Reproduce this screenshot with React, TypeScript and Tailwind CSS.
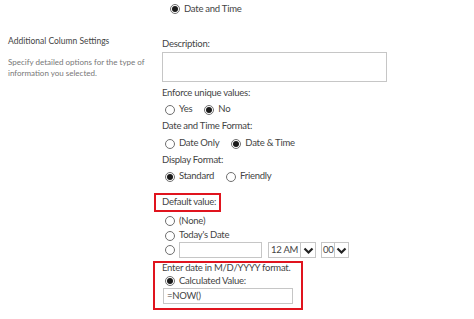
import React from "react";

function Radio({ checked }: { checked?: boolean }) {
  return (
    <span className="inline-flex h-[10px] w-[10px] shrink-0 items-center justify-center rounded-full border border-[#6f6f6f] bg-white">
      {checked && <span className="h-[6px] w-[6px] rounded-full bg-[#1a1a1a]" />}
    </span>
  );
}

function Opt({ checked, label }: { checked?: boolean; label: string }) {
  return (
    <span className="inline-flex items-center gap-[4px] whitespace-nowrap">
      <Radio checked={checked} />
      <span>{label}</span>
    </span>
  );
}

function Chevron() {
  return (
    <span className="flex h-full w-[15px] items-center justify-center border-l border-[#c6c6c6] bg-white">
      <svg width="11" height="9" viewBox="0 0 11 9">
        <path d="M1.5 2.5 L5.5 6.5 L9.5 2.5" stroke="#222" strokeWidth="2.2" fill="none" />
      </svg>
    </span>
  );
}

export default function App() {
  return (
    <div
      className="flex h-[319px] w-[474px] whitespace-nowrap bg-white text-[#444]"
      style={{ fontFamily: 'Lato, "Open Sans", sans-serif' }}
    >
      <div className="w-[162px] shrink-0 pl-[8px] pt-[35px]">
        <div className="text-[8.5px] leading-[12px] text-[#444]">Additional Column Settings</div>
        <div className="mt-[10px] w-[150px] whitespace-normal text-[8px] leading-[11px] text-[#777]">
          Specify detailed options for the type of
          <br />
          information you selected.
        </div>
      </div>
      <div className="flex flex-col text-[9.5px] tracking-[-0.25px] text-[#444]">
        <div className="flex h-[18px] items-center pl-[8px]">
          <Opt checked label="Date and Time" />
        </div>
        <div className="mt-[19px] flex h-[15px] items-center">Description:</div>
        <div className="h-[30px] w-[225px] border border-[#c6c6c6] bg-white" />
        <div className="mt-[3px] flex h-[16px] items-center">Enforce unique values:</div>
        <div className="flex h-[17px] items-center gap-[12px] pl-[3px]">
          <Opt label="Yes" />
          <Opt checked label="No" />
        </div>
        <div className="flex h-[17px] items-center">Date and Time Format:</div>
        <div className="flex h-[17px] items-center gap-[12px] pl-[3px]">
          <Opt label="Date Only" />
          <Opt checked label="Date &amp; Time" />
        </div>
        <div className="flex h-[17px] items-center">Display Format:</div>
        <div className="flex h-[15px] items-center gap-[12px] pl-[3px]">
          <Opt checked label="Standard" />
          <Opt label="Friendly" />
        </div>
        <div className="-ml-[8px] mt-[9px] flex h-[19px] w-[67px] items-center border-2 border-[#e0141e] pl-[6px]">
          Default value:
        </div>
        <div className="mt-[1px] flex h-[16px] items-center pl-[3px]">
          <Opt label="(None)" />
        </div>
        <div className="flex h-[13px] items-center pl-[3px]">
          <Opt label="Today's Date" />
        </div>
        <div className="flex h-[16px] items-center pl-[3px]">
          <Radio />
          <span className="ml-[4px] h-[16px] w-[83px] border border-[#c6c6c6] bg-white" />
          <span className="ml-[6px] flex h-[16px] w-[48px] items-center border border-[#c6c6c6] bg-white">
            <span className="flex-1 pl-[2px]">12 AM</span>
            <Chevron />
          </span>
          <span className="ml-[5px] flex h-[16px] w-[28px] items-center border border-[#c6c6c6] bg-white">
            <span className="flex-1 pl-[1px]">00</span>
            <Chevron />
          </span>
        </div>
        <div className="-ml-[9px] mt-[3px] flex h-[49px] w-[150px] flex-col border-2 border-[#e0141e] pl-[7px]">
          <div className="flex h-[11px] items-center">Enter date in M/D/YYYY format.</div>
          <div className="flex h-[14px] items-center pl-[3px]">
            <Opt checked label="Calculated Value:" />
          </div>
          <div className="ml-[1px] flex h-[16px] w-[130px] items-center border border-[#c6c6c6] bg-white pl-[3px]">
            =NOW()
          </div>
        </div>
      </div>
    </div>
  );
}
